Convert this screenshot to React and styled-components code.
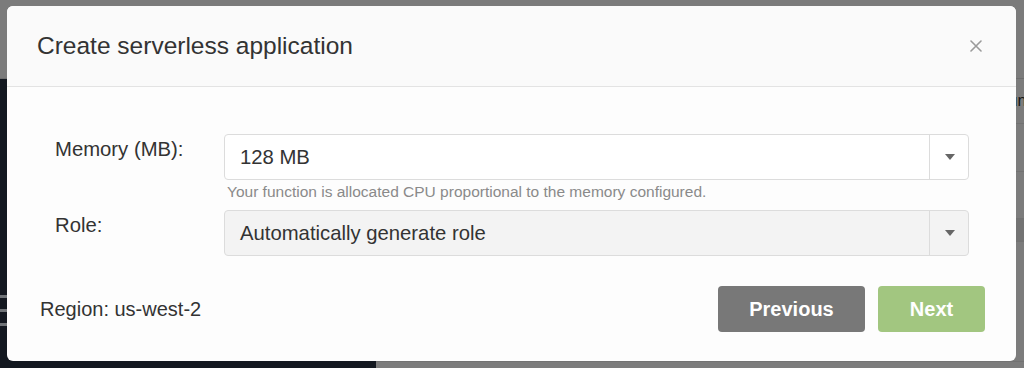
import React from "react";
import styled, { createGlobalStyle } from "styled-components";

const Global = createGlobalStyle`
  html, body { margin: 0; padding: 0; }
  body {
    width: 1024px;
    height: 368px;
    overflow: hidden;
    font-family: "Liberation Sans", Arial, sans-serif;
    background: #7a7a7a;
  }
  * { box-sizing: border-box; }
`;

const Page = styled.div`
  position: relative;
  width: 1024px;
  height: 368px;
  display: flex;
  flex-direction: column;
  overflow: hidden;
`;

const TopBar = styled.div`
  height: 79px;
  background: #7b7b7b;
  border-bottom: 1px solid #6e6e6e;
  flex: none;
`;

const Below = styled.div`
  flex: 1;
  display: flex;
  min-height: 0;
`;

const Sidebar = styled.div`
  flex: none;
  width: 376px;
  background: #131820;
  display: flex;
  flex-direction: column;
  justify-content: flex-end;
  padding-bottom: 42px;
  gap: 11px;
`;

const SideLine = styled.div`
  height: 3px;
  width: 10px;
  background: #6f7377;
`;

const Main = styled.div`
  flex: 1;
  min-width: 0;
  overflow: hidden;
  background: #7c7c7c;
  display: flex;
  flex-direction: column;
`;

const MainRow = styled.div`
  flex: none;
  height: ${(p) => p.$h}px;
  background: ${(p) => (p.$dark ? "#737373" : "#7c7c7c")};
  border-bottom: 1px solid #727272;
  display: flex;
  align-items: center;
  padding-left: 621px;
  font-size: 16px;
  color: #161616;
  white-space: nowrap;
`;

const Overlay = styled.div`
  position: absolute;
  left: 7px;
  top: 6px;
  width: 1009px;
  height: 355px;
  background: #fdfdfd;
  border-radius: 6px;
  display: flex;
  flex-direction: column;
  overflow: hidden;
`;

const Header = styled.div`
  height: 81px;
  flex: none;
  background: #fafafa;
  border-bottom: 1px solid #e3e3e3;
  display: flex;
  align-items: center;
  justify-content: space-between;
  padding: 0 34px 0 30px;
`;

const Title = styled.h2`
  margin: 0;
  font-size: 24.5px;
  font-weight: 400;
  color: #333;
`;

const Close = styled.button`
  border: 0;
  background: none;
  padding: 0;
  width: 13px;
  height: 13px;
  display: flex;
  align-items: center;
  justify-content: center;
  cursor: pointer;
`;

const Body = styled.div`
  padding: 47px 47px 0 48px;
  display: flex;
  flex-direction: column;
`;

const FieldRow = styled.div`
  display: grid;
  grid-template-columns: 169px 1fr;
`;

const Label = styled.label`
  font-size: 20.3px;
  color: #333;
  padding-top: 4px;
  line-height: 23px;
`;

const SelectBox = styled.div`
  height: 46px;
  border: 1px solid #dcdcdc;
  border-radius: 4px;
  background: ${(p) => (p.$disabled ? "#f3f3f3" : "#ffffff")};
  display: flex;
  align-items: stretch;
`;

const SelectValue = styled.div`
  flex: 1;
  display: flex;
  align-items: center;
  padding-left: 15px;
  font-size: 20.3px;
  color: #333;
`;

const Arrow = styled.div`
  width: 39px;
  border-left: 1px solid #dcdcdc;
  display: flex;
  align-items: center;
  justify-content: center;
  padding-left: 2px;
`;

const Caret = styled.span`
  width: 0;
  height: 0;
  border-left: 5.5px solid transparent;
  border-right: 5.5px solid transparent;
  border-top: 6px solid #666;
`;

const Help = styled.div`
  font-size: 15.5px;
  color: #8a8a8a;
  line-height: 18px;
  padding: 3px 0 9px 3px;
`;

const Footer = styled.div`
  margin-top: auto;
  display: flex;
  align-items: center;
  justify-content: space-between;
  padding: 0 31px 29px 33px;
`;

const Region = styled.div`
  font-size: 20px;
  color: #333;
`;

const Buttons = styled.div`
  display: flex;
  gap: 13px;
`;

const Button = styled.button`
  height: 46px;
  width: ${(p) => p.$w}px;
  border: 0;
  border-radius: 4px;
  background: ${(p) => p.$bg};
  color: #fff;
  font-family: "Liberation Sans", Arial, sans-serif;
  font-weight: 700;
  font-size: 20px;
  cursor: pointer;
`;

function Select({ value, disabled }) {
  return (
    <SelectBox $disabled={disabled}>
      <SelectValue>{value}</SelectValue>
      <Arrow>
        <Caret />
      </Arrow>
    </SelectBox>
  );
}

export default function App() {
  return (
    <>
      <Global />
      <Page>
        <TopBar />
        <Below>
          <Sidebar>
            <SideLine />
            <SideLine />
            <SideLine />
          </Sidebar>
          <Main>
            <MainRow $h={45}>Runbook</MainRow>
            <MainRow $h={48} />
            <MainRow $h={47} />
            <MainRow $h={23} $dark />
            <MainRow $h={120} />
          </Main>
        </Below>
        <Overlay>
          <Header>
            <Title>Create serverless application</Title>
            <Close aria-label="Close">
              <svg width="12" height="12" viewBox="0 0 12 12">
                <path d="M1 1L11 11M11 1L1 11" stroke="#9a9a9a" strokeWidth="1.6" strokeLinecap="round" />
              </svg>
            </Close>
          </Header>
          <Body>
            <FieldRow>
              <Label>Memory (MB):</Label>
              <div>
                <Select value="128 MB" />
                <Help>Your function is allocated CPU proportional to the memory configured.</Help>
              </div>
            </FieldRow>
            <FieldRow>
              <Label>Role:</Label>
              <Select value="Automatically generate role" disabled />
            </FieldRow>
          </Body>
          <Footer>
            <Region>Region: us-west-2</Region>
            <Buttons>
              <Button $w={147} $bg="#787878">Previous</Button>
              <Button $w={107} $bg="#a2c680">Next</Button>
            </Buttons>
          </Footer>
        </Overlay>
      </Page>
    </>
  );
}
